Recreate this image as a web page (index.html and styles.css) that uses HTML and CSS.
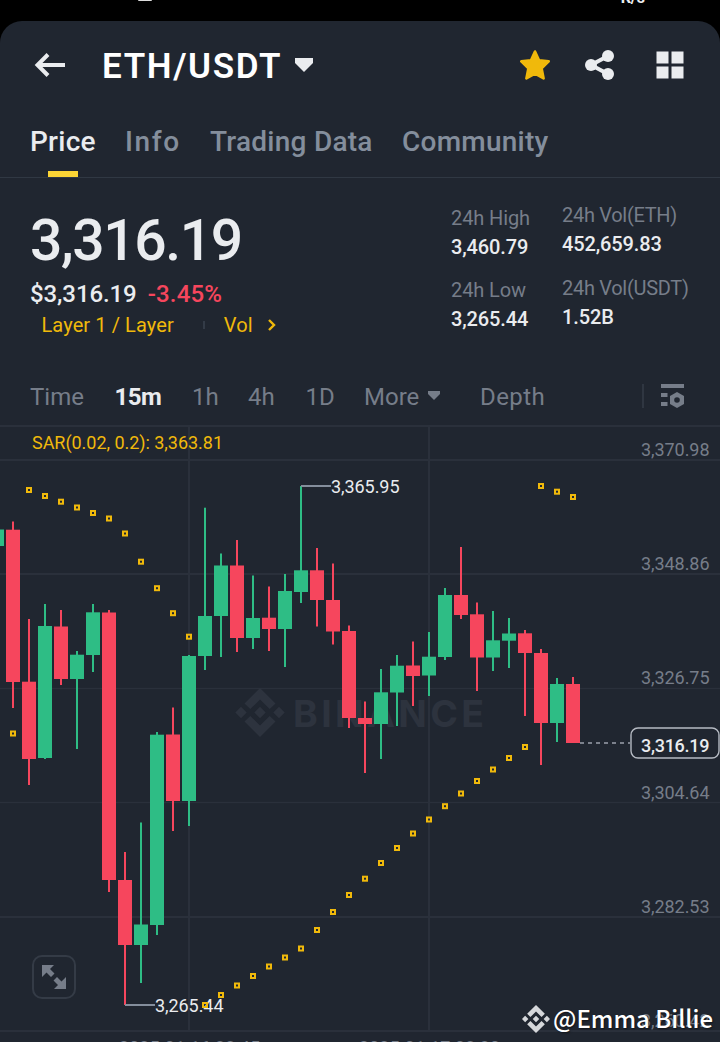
FILE: index.html
```html
<!DOCTYPE html>
<html lang="en">
<head>
    <meta charset="UTF-8">
    <meta name="viewport" content="width=device-width, initial-scale=1.0">
    <title>ETH/USDT</title>
    <link rel="stylesheet" href="styles.css">
</head>
<body>
    <div class="status-bar">
        <span class="status-icon"></span>
        <span class="net-speed">K/s</span>
    </div>
    <div class="container">
        <div class="header">
            <svg class="back-icon" width="32" height="26" viewBox="0 0 32 26"><path d="M14 2.5 3.5 13 14 23.5M3.5 13H31" fill="none" stroke="#eaecef" stroke-width="4"/></svg>
            <h1>ETH/USDT</h1>
            <svg class="pair-caret" width="18" height="14" viewBox="0 0 18 14"><path d="M0 0h18v5L9 14 0 5z" fill="#eaecef"/></svg>
            <div class="header-icons">
                <svg width="30" height="30" viewBox="0 0 30 30"><path d="M15 1.5 19 10.3 28.7 11.4 21.6 18.2 23.6 28.4 15 23.6 6.4 28.4 8.4 18.2 1.3 11.4 11 10.3z" fill="#f0b90b" stroke="#f0b90b" stroke-width="2.6" stroke-linejoin="round"/></svg>
                <svg width="30" height="30" viewBox="0 0 30 30"><path d="M23 6 6 15l17 9" fill="none" stroke="#eaecef" stroke-width="4"/><circle cx="23" cy="6" r="6" fill="#eaecef"/><circle cx="6" cy="15" r="6" fill="#eaecef"/><circle cx="23" cy="24" r="6" fill="#eaecef"/></svg>
                <svg width="28" height="28" viewBox="0 0 28 28"><path d="M.5.5h12v12H.5zM15.5.5h12v12h-12zM.5 15.5h12v12H.5zM15.5 15.5h12v12h-12z" fill="#eaecef"/></svg>
            </div>
        </div>

        <div class="tabs">
            <div class="tab active">Price</div>
            <div class="tab info">Info</div>
            <div class="tab">Trading Data</div>
            <div class="tab">Community</div>
        </div>

        <div class="summary">
            <div class="price-box">
                <div class="last-price">3,316.19</div>
                <div class="fiat-row"><span class="fiat">$3,316.19</span><span class="change">-3.45%</span></div>
                <div class="tags">
                    <span class="tag">Layer 1 / Layer</span>
                    <span class="tag-line"></span>
                    <span class="tag">Vol</span>
                    <svg class="tag-arrow" width="8" height="12" viewBox="0 0 8 12"><path d="M1 1l5 5-5 5" fill="none" stroke="#f0b90b" stroke-width="2.4"/></svg>
                </div>
            </div>
            <div class="stats">
                <div class="label">24h High</div>
                <div class="value">3,460.79</div>
                <div class="label">24h Low</div>
                <div class="value">3,265.44</div>
            </div>
            <div class="stats volume">
                <div class="label">24h Vol(ETH)</div>
                <div class="value">452,659.83</div>
                <div class="label">24h Vol(USDT)</div>
                <div class="value">1.52B</div>
            </div>
        </div>

        <div class="intervals">
            <span>Time</span>
            <span class="selected">15m</span>
            <span>1h</span>
            <span>4h</span>
            <span>1D</span>
            <span class="more">More <svg width="12" height="9" viewBox="0 0 12 9"><path d="M0 0h12v3L6 9 0 3z" fill="#767d89"/></svg></span>
            <span class="depth">Depth</span>
            <span class="settings">
                <svg width="23" height="25" viewBox="0 0 23 25"><path d="M0 0h23v4H0zM0 9h6.500v4H0zM0 18h6.500v4H0z" fill="#767d89"/><path d="M16 8l7 4v8l-7 4-7-4v-8z" fill="#767d89"/><circle cx="16" cy="16" r="2.800" fill="#202630"/></svg>
            </span>
        </div>

        <svg class="chart" id="chart" width="720" height="617" viewBox="0 425 720 617"></svg>
    </div>

    <div class="author">
        <svg width="28" height="28" viewBox="-24.500 -24.500 49 49" fill="#d5d7da"><use href="#logo"/></svg>
        <span>@Emma Billie</span>
    </div>

    <script>
        const UP = '#2ebd85';
        const DOWN = '#f6465d';
        const STEP = 16;

        // [direction, body top, body bottom, wick top, wick bottom]
        const candles = [
            ['u', 529.5, 546, 529.5, 546],
            ['d', 529.7, 682, 521.5, 708],
            ['d', 681.7, 759, 619, 785],
            ['u', 626, 758, 604, 759],
            ['d', 626.5, 679, 610, 685],
            ['u', 654.7, 679, 651, 749],
            ['u', 612.3, 655, 604, 672],
            ['d', 612.5, 880, 610, 892],
            ['d', 880, 945, 852, 1005],
            ['u', 924.5, 945, 822.5, 983],
            ['u', 734.7, 925, 732, 935],
            ['d', 734.5, 801, 707.5, 831],
            ['u', 656, 801, 655, 826],
            ['u', 616, 656, 507.7, 670],
            ['u', 565.5, 616, 553.5, 657],
            ['d', 565.5, 638, 540, 652],
            ['u', 618, 638, 575.5, 649],
            ['d', 617.7, 629, 586.5, 651],
            ['u', 591, 629, 574, 667],
            ['u', 570.3, 592, 486, 603],
            ['d', 570.3, 600, 548, 626.5],
            ['d', 600, 631.5, 563.5, 644.5],
            ['d', 631, 718, 625.5, 728],
            ['d', 718, 724, 701.5, 773],
            ['u', 692.3, 724, 669, 759],
            ['u', 665.7, 692.5, 655, 726],
            ['d', 665.5, 676, 641.5, 706],
            ['u', 656.7, 675.5, 632, 696],
            ['u', 595, 657, 588, 660],
            ['d', 595, 615, 547, 619],
            ['d', 614.3, 657.5, 602.5, 691],
            ['u', 640.3, 657.5, 611, 671],
            ['u', 633.5, 640.7, 618, 668],
            ['d', 633.3, 653, 630, 716],
            ['d', 653, 723, 649, 765],
            ['u', 684, 723, 678, 742],
            ['d', 684, 743, 677, 743]
        ];

        // Parabolic SAR marks, [x, y]
        const sar = [
            [13, 733.5], [29, 490], [45, 496], [61, 501.7], [77, 507.5], [93, 513], [109, 518.5],
            [125, 533.5], [141, 561.7], [157, 588.2], [173, 613.2], [189, 636.7],
            [205, 1005], [221, 995], [237, 985.5], [253, 976], [269, 966.5], [285, 957.5],
            [301, 948.5], [317, 930], [333, 912], [349, 895], [365, 878.7], [381, 863],
            [397, 848], [413, 833.5], [429, 819.5], [445, 806.2], [461, 793.5], [477, 781],
            [493, 769.5], [509, 758], [525, 747], [541, 486], [557, 491.7], [573, 497]
        ];

        const prices = [
            ['3,370.98', 456], ['3,348.86', 570], ['3,326.75', 684],
            ['3,304.64', 799], ['3,282.53', 913], ['3,260.42', 1027]
        ];

        let svg = '';

        // Grid
        for (const [y, h] of [[425, 2], [459, 2], [573, 2], [687.8, 1.4], [801.8, 1.4], [916, 2], [1030, 2]]) {
            svg += `<rect class="grid" x="0" y="${y}" width="720" height="${h}"/>`;
        }
        svg += '<rect class="grid" x="188" y="427" width="2" height="604"/>';
        svg += '<rect class="grid" x="428" y="427" width="2" height="604"/>';

        // Watermark
        svg += `<g class="watermark"><g transform="translate(260 712.5)"><g id="logo">
            <path d="M0-24.500 15.500-9 9.700-3.400 0-13.100-9.700-3.400-15.500-9z"/>
            <path d="M0 24.500 15.500 9 9.700 3.400 0 13.100-9.700 3.400-15.500 9z"/>
            <path d="M0-5.700 5.700 0 0 5.700-5.700 0zM-19-5.700-13.300 0-19 5.700-24.700 0zM19-5.700 24.700 0 19 5.700 13.300 0z"/>
            </g></g><text x="293" y="726.5" textLength="191">BINANCE</text></g>`;

        candles.forEach(([dir, top, bottom, high, low], i) => {
            const x = -3 + i * STEP;
            const fill = dir === 'u' ? UP : DOWN;
            svg += `<rect x="${x - 1}" y="${high}" width="2" height="${low - high}" fill="${fill}"/>`;
            svg += `<rect x="${x - 7}" y="${top}" width="14" height="${bottom - top}" fill="${fill}"/>`;
        });

        // High and low of the visible range
        svg += '<path class="pointer" d="M301 486h30M125 1005h30"/>';
        svg += '<text class="peak" x="331" y="493" textLength="68.5">3,365.95</text>';
        svg += '<text class="peak" x="155" y="1012" textLength="68.5">3,265.44</text>';

        for (const [x, y] of sar) {
            svg += `<rect class="sar" x="${x - 2}" y="${y - 2}" width="4" height="4"/>`;
        }
        svg += '<text class="indicator" x="32" y="449" textLength="191">SAR(0.02, 0.2): 3,363.81</text>';

        for (const [label, y] of prices) {
            svg += `<text class="axis" x="641" y="${y}" textLength="68.5">${label}</text>`;
        }
        svg += '<text class="axis" x="119" y="1053.500" textLength="141">2025-01-16 22:45</text>';
        svg += '<text class="axis" x="359" y="1053.500" textLength="141">2025-01-17 02:30</text>';

        // Current price
        svg += '<path class="price-line" d="M580 743h50"/>';
        svg += '<rect class="price-tag" x="631" y="728" width="88" height="30" rx="7"/>';
        svg += '<text class="current" x="641" y="752" textLength="68.5">3,316.19</text>';

        // Fullscreen button
        svg += '<rect class="expand" x="33" y="956" width="42" height="42" rx="9"/>';
        svg += '<path class="expand-icon" d="M42 965h12l-4 4 4.500 4.500-3.500 3.500-4.500-4.500-4.500 4.500zM66 989H54l4-4-4.500-4.500 3.500-3.500 4.500 4.500 4.500-4.500z"/>';

        document.getElementById('chart').innerHTML = svg;
    </script>
</body>
</html>
```
FILE: styles.css
```css
body {
    font-family: Roboto, "Liberation Sans", sans-serif;
    margin: 0;
    padding: 0;
    height: 1042px;
    overflow: hidden;
    position: relative;
    background-color: #000;
    color: #eaecef;
}
.status-bar {
    height: 21px;
    display: flex;
    justify-content: space-between;
    padding: 0 75px 0 138px;
    box-sizing: border-box;
}
.status-icon {
    width: 14px;
    height: 1px;
    background-color: #ddd;
    border-radius: 0 0 4px 4px;
}
.net-speed {
    font-size: 16px;
    font-weight: 700;
    line-height: 16px;
    margin-top: -10px;
}
.container {
    background-color: #202630;
    border-radius: 22px 22px 0 0;
    height: 1021px;
    overflow: hidden;
}
.header {
    display: flex;
    align-items: center;
    height: 88px;
    padding: 0 36px 0 34px;
}
.back-icon {
    margin-right: 36px;
}
h1 {
    margin: 4px 0 0;
    font-size: 35px;
    line-height: 40px;
    font-weight: 600;
    letter-spacing: 1.6px;
    color: #fff;
}
.pair-caret {
    margin-left: 13px;
}
.header-icons {
    display: flex;
    align-items: center;
    margin-left: auto;
}
.header-icons svg:nth-child(2) {
    margin: 0 41px 0 35px;
}
.tabs {
    display: grid;
    grid-template-columns: 95px 85px 192px auto;
    height: 68px;
    padding-left: 30px;
    border-bottom: 1px solid #303843;
}
.tab {
    font-size: 28px;
    font-weight: 500;
    line-height: 66px;
    letter-spacing: 0.25px;
    color: #848e9c;
}
.tab.info {
    letter-spacing: 1.6px;
}
.tab.active {
    color: #eaecef;
}
.tab.active::after {
    content: "";
    display: block;
    width: 30px;
    height: 6px;
    margin: -4px 0 0 18px;
    background-color: #fcd535;
}
.summary {
    display: flex;
    height: 187px;
    padding-left: 30px;
}
.price-box {
    width: 421px;
    padding-top: 31px;
}
.last-price {
    font-size: 57px;
    line-height: 64px;
    font-weight: 500;
    letter-spacing: -1.4px;
}
.fiat-row {
    font-size: 24px;
    font-weight: 500;
    line-height: 40px;
    margin-top: 1px;
    letter-spacing: -0.1px;
}
.change {
    color: #f6465d;
    margin-left: 11px;
    letter-spacing: 0.2px;
}
.tags {
    display: flex;
    align-items: center;
    height: 22px;
    padding-left: 11.5px;
    font-size: 20px;
    letter-spacing: 0.1px;
    color: #f0b90b;
}
.tag-line {
    width: 2px;
    height: 8px;
    margin: 0 19px 0 29px;
    background-color: #333b47;
}
.tag-arrow {
    margin-left: 15px;
}
.stats {
    width: 111px;
    padding-top: 26px;
    font-size: 20px;
    line-height: 28px;
    white-space: nowrap;
}
.stats.volume {
    padding-top: 23px;
}
.label {
    color: #767d89;
    letter-spacing: -0.1px;
}
.volume .label {
    letter-spacing: -0.3px;
}
.value {
    font-weight: 500;
    line-height: 30px;
    letter-spacing: -0.12px;
    margin-bottom: 14px;
}
.volume .value {
    margin-bottom: 15px;
}
.intervals {
    display: grid;
    grid-template-columns: 84.5px 77.5px 56px 57.5px 58.5px 116px 162px auto;
    align-items: center;
    height: 57px;
    padding: 3px 0 0 30px;
    font-size: 24px;
    color: #767d89;
}
.intervals .selected {
    color: #eaecef;
    font-weight: 700;
    letter-spacing: -0.5px;
}
.more svg {
    margin-left: 3px;
    vertical-align: 5px;
}
.depth {
    letter-spacing: 0.4px;
}
.settings {
    display: flex;
    align-items: center;
    height: 24px;
    margin-top: -1px;
    padding-left: 16.5px;
    border-left: 2px solid #2f3641;
}
.chart {
    display: block;
    font-size: 18px;
}
.grid {
    fill: #2a303b;
}
.watermark {
    fill: #2d333e;
    font-family: Inter, sans-serif;
    font-size: 37.5px;
    font-weight: 700;
}
.pointer {
    stroke: #848e9c;
    stroke-width: 2;
}
.peak {
    fill: #eaecef;
}
.sar {
    fill: none;
    stroke: #f0b90b;
    stroke-width: 2;
}
.indicator {
    fill: #f0b90b;
}
.axis {
    fill: #767d89;
}
.price-line {
    stroke: #9aa0aa;
    stroke-width: 1.5;
    stroke-dasharray: 4 4;
}
.price-tag {
    fill: #202630;
    stroke: #b5bac2;
    stroke-width: 1.4;
}
.current {
    fill: #eaecef;
    font-weight: 500;
}
.expand {
    fill: #202630;
    stroke: #343b46;
    stroke-width: 2;
}
.expand-icon {
    fill: #767d89;
}
.author {
    position: absolute;
    right: 7px;
    bottom: 6px;
    display: flex;
    align-items: center;
    gap: 3.5px;
    font-family: "Noto Sans CJK SC", "Noto Sans", sans-serif;
    font-size: 24px;
    font-weight: 500;
    line-height: 36px;
    color: #fff;
    text-shadow: 1px 1px 2px rgba(0, 0, 0, 0.5);
}
.author span {
    margin-top: -2px;
}
```
